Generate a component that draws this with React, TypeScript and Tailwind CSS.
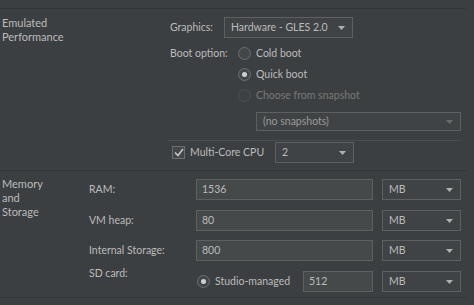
import React from "react";

const Arrow = ({ color }: { color: string }) => (
  <svg width="7" height="4" viewBox="0 0 7 4" className="shrink-0">
    <path d="M0 0 H7 L3.5 4 Z" fill={color} />
  </svg>
);

const Combo = ({ text, w, disabled }: { text: string; w: string; disabled?: boolean }) => (
  <div
    className={`${w} h-full shrink-0 flex items-center justify-between pl-[6px] pr-[7px] border border-[#5e6060] bg-[#404345] whitespace-nowrap ${
      disabled ? "text-[#9a9a9a]" : "text-[#bbbbbb]"
    }`}
  >
    <span>{text}</span>
    <Arrow color={disabled ? "#6a6a6a" : "#b0b0b0"} />
  </div>
);

const Radio = ({ checked, disabled }: { checked?: boolean; disabled?: boolean }) => (
  <div
    className={`w-[13px] h-[13px] rounded-full border flex items-center justify-center shrink-0 ${
      disabled ? "border-[#4f5254] bg-[#3e4143]" : "border-[#6b6e70] bg-[#43474a]"
    }`}
  >
    {checked && <div className="w-[5px] h-[5px] rounded-full bg-[#d0d0d0]" />}
  </div>
);

const Input = ({ value, w }: { value: string; w: string }) => (
  <div className={`${w} h-full shrink-0 flex items-center pl-[5px] border border-[#5e6060] bg-[#45494a] text-[#bbbbbb]`}>
    {value}
  </div>
);

export default function App() {
  return (
    <div
      className="w-[474px] h-[305px] bg-[#3c3f41] overflow-hidden text-[10.5px] text-[#bbbbbb] whitespace-nowrap"
      style={{ fontFamily: 'Lato, "Liberation Sans", sans-serif' }}
    >
      <div className="h-[9px] w-[466px] border-b border-[#323436]" />
      {/* Emulated Performance */}
      <div className="flex h-[162px] w-[466px] border-b border-[#323436]">
        <div className="w-[170px] shrink-0 pl-[2px] pt-[7px] leading-[14px] text-[11px]">
          Emulated
          <br />
          Performance
        </div>
        <div className="flex flex-col">
          <div className="mt-[8px] h-[21px] flex items-center">
            <div className="w-[54px] shrink-0">Graphics:</div>
            <Combo text="Hardware - GLES 2.0" w="w-[129px]" />
          </div>
          <div className="mt-[5px] flex">
            <div className="w-[67px] shrink-0 h-[21px] flex items-center">Boot option:</div>
            <div className="flex flex-col">
              <div className="h-[21px] flex items-center gap-[5px] pl-[1px]">
                <Radio />
                <span>Cold boot</span>
              </div>
              <div className="h-[21px] flex items-center gap-[5px] pl-[1px]">
                <Radio checked />
                <span>Quick boot</span>
              </div>
              <div className="h-[21px] flex items-center gap-[5px] pl-[1px] text-[#787878]">
                <Radio disabled />
                <span>Choose from snapshot</span>
              </div>
            </div>
          </div>
          <div className="mt-[6px] ml-[86px] h-[19px]">
            <Combo text="(no snapshots)" w="w-[205px]" disabled />
          </div>
          <div className="mt-[9px] ml-[-2px] w-[293px] border-t border-[#4a4d4f]" />
          <div className="mt-[1px] h-[21px] flex items-center">
            <div className="w-[105px] shrink-0 flex items-center gap-[5px] pl-[2px]">
              <div className="w-[13px] h-[13px] shrink-0 border border-[#6b6e70] bg-[#43474a] flex items-center justify-center">
                <svg width="10" height="9" viewBox="0 0 10 9">
                  <path d="M1 4.5 L4 7.5 L9 1" stroke="#c8c8c8" strokeWidth="1.5" fill="none" />
                </svg>
              </div>
              <span>Multi-Core CPU</span>
            </div>
            <Combo text="2" w="w-[79px]" />
          </div>
        </div>
      </div>
      {/* Memory and Storage */}
      <div className="flex h-[127px] w-[466px] border-b border-[#323436]">
        <div className="w-[89px] shrink-0 pl-[2px] pt-[6px] leading-[14px] text-[11px]">
          Memory
          <br />
          and
          <br />
          Storage
        </div>
        <div className="flex flex-col">
          {[
            ["RAM:", "1536", "mt-[8px]"],
            ["VM heap:", "80", "mt-[10px]"],
            ["Internal Storage:", "800", "mt-[9px]"],
          ].map(([label, val, mt]) => (
            <div key={label} className={`${mt} h-[21px] flex items-center`}>
              <div className="w-[107px] shrink-0">{label}</div>
              <Input value={val} w="w-[177px]" />
              <div className="ml-[9px] h-full">
                <Combo text="MB" w="w-[79px]" />
              </div>
            </div>
          ))}
          <div className="mt-[10px] h-[21px] flex">
            <div className="w-[107px] shrink-0 mt-[-5px]">SD card:</div>
            <div className="w-[107px] shrink-0 flex items-center gap-[5px] pl-[1px]">
              <Radio checked />
              <span>Studio-managed</span>
            </div>
            <Input value="512" w="w-[70px]" />
            <div className="ml-[9px] h-full">
              <Combo text="MB" w="w-[79px]" />
            </div>
          </div>
        </div>
      </div>
    </div>
  );
}
